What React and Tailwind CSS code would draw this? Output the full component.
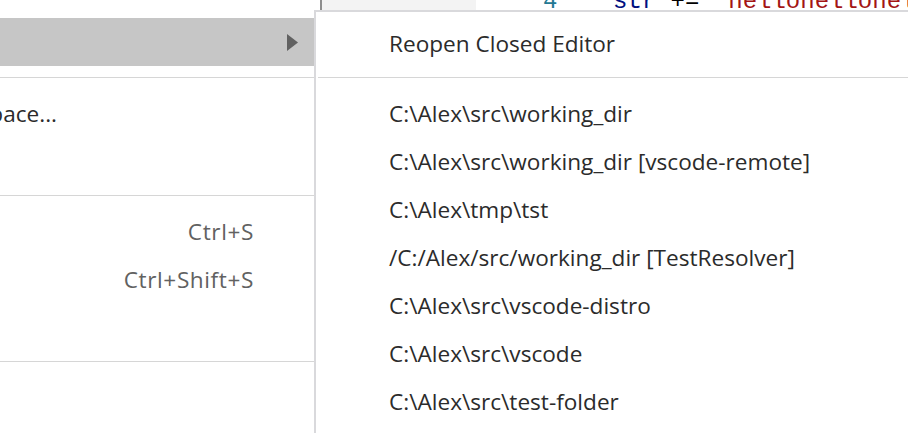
export default function App() {
  const font = { fontFamily: '"Open Sans", "Noto Sans", sans-serif' };
  const Sep = () => (
    <div className="h-[22px] pt-[11px]">
      <div className="h-px bg-[#d6d6d6]" />
    </div>
  );
  const recent = [
    "C:\\Alex\\src\\working_dir",
    "C:\\Alex\\src\\working_dir [vscode-remote]",
    "C:\\Alex\\tmp\\tst",
    "/C:/Alex/src/working_dir [TestResolver]",
    "C:\\Alex\\src\\vscode-distro",
    "C:\\Alex\\src\\vscode",
    "C:\\Alex\\src\\test-folder",
  ];
  return (
    <div
      className="w-[908px] h-[433px] overflow-hidden bg-white flex text-[22.6px] text-[#2b2b2b]"
      style={font}
    >
      {/* Left menu */}
      <div className="w-[314px] shrink-0 pt-[18px] flex flex-col">
        <div className="h-[48px] bg-[#c6c6c6] flex items-center justify-end pr-[16px]">
          <svg width="11" height="17" viewBox="0 0 11 17">
            <polygon points="0,0 11,8.5 0,17" fill="#616161" />
          </svg>
        </div>
        <Sep />
        <div className="h-[48px] flex items-center pt-[3px]">
          <div className="w-[57px] flex justify-end whitespace-nowrap">
            <span>Add Folder to Workspace...</span>
          </div>
        </div>
        <div className="h-[48px]" />
        <Sep />
        <div className="h-[48px] flex items-center justify-end pr-[60px] pt-[3px] text-[#616161] tracking-[0.6px]">
          Ctrl+S
        </div>
        <div className="h-[48px] flex items-center justify-end pr-[60px] pt-[3px] text-[#616161] tracking-[0.6px]">
          Ctrl+Shift+S
        </div>
        <div className="h-[48px]" />
        <Sep />
        <div className="h-[48px]" />
      </div>

      {/* Right column */}
      <div className="flex-1 flex flex-col min-w-0">
        {/* Editor strip behind the submenu */}
        <div className="h-[10px] shrink-0 flex overflow-hidden">
          <div className="w-[6px] shrink-0 bg-white" />
          <div className="w-[2px] shrink-0 bg-[#8e8e8e]" />
          <div className="w-[154px] shrink-0 bg-[#f3f3f3]" />
          <div
            className="flex-1 min-w-0 overflow-hidden flex whitespace-pre text-[24px] leading-[24px] mt-[-10px] pl-[67px]"
            style={{ fontFamily: '"Liberation Mono", "DejaVu Sans Mono", monospace' }}
          >
            <span className="w-[70px] shrink-0 text-[#237893]">4</span>
            <span className="text-[#001080]">str</span>
            <span className="text-black"> += </span>
            <span className="text-[#a31515]">"hellohellohellohello"</span>
          </div>
        </div>
        {/* Submenu */}
        <div className="flex-1 border-t-2 border-l-2 border-[#d9d9dc] pt-[6px] flex flex-col">
          <div className="h-[48px] flex items-center pl-[73px] pt-[3px] whitespace-nowrap">
            Reopen Closed Editor
          </div>
          <div className="h-[22px] pt-[11px] pl-[2px]">
            <div className="h-px bg-[#d6d6d6]" />
          </div>
          {recent.map((r) => (
            <div key={r} className="h-[48px] flex items-center pl-[73px] pt-[3px] whitespace-nowrap">
              {r}
            </div>
          ))}
        </div>
      </div>
    </div>
  );
}
